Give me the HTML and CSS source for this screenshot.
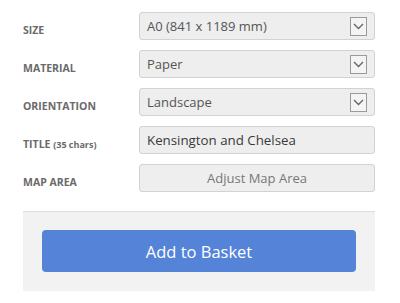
FILE: index.html
```html
<!DOCTYPE html>
<html lang="en">
<head>
  <meta charset="UTF-8">
  <title>Map Options</title>
  <link rel="stylesheet" href="styles.css">
</head>
<body>
  <div class="options">
    <div class="row">
      <div class="label">Size</div>
      <div class="field select">
        <span>A0 (841 x 1189 mm)</span>
        <span class="arrow"><svg width="11" height="7" viewBox="0 0 11 7"><path d="M1 1l4.5 4.5L10 1" fill="none" stroke="#666" stroke-width="1.4"/></svg></span>
      </div>
    </div>
    <div class="row">
      <div class="label">Material</div>
      <div class="field select">
        <span>Paper</span>
        <span class="arrow"><svg width="11" height="7" viewBox="0 0 11 7"><path d="M1 1l4.5 4.5L10 1" fill="none" stroke="#666" stroke-width="1.4"/></svg></span>
      </div>
    </div>
    <div class="row">
      <div class="label">Orientation</div>
      <div class="field select">
        <span>Landscape</span>
        <span class="arrow"><svg width="11" height="7" viewBox="0 0 11 7"><path d="M1 1l4.5 4.5L10 1" fill="none" stroke="#666" stroke-width="1.4"/></svg></span>
      </div>
    </div>
    <div class="row">
      <div class="label">Title <small>(35 chars)</small></div>
      <div class="field input">Kensington and Chelsea</div>
    </div>
    <div class="row">
      <div class="label">Map Area</div>
      <div class="field button">Adjust Map Area</div>
    </div>
  </div>

  <div class="basket">
    <button class="basket-btn">Add to Basket</button>
  </div>
</body>
</html>
```

FILE: styles.css
```css
body {
  margin: 0;
  background: white;
  font-family: "Open Sans", Arial, sans-serif;
}
.options {
  width: 352px;
  margin: 12px 0 0 23px;
  display: flex;
  flex-direction: column;
  gap: 10px;
}
.row {
  display: grid;
  grid-template-columns: 116px 236px;
  align-items: center;
}
.label {
  font-size: 10.5px;
  font-weight: bold;
  text-transform: uppercase;
  color: #6a6a6a;
  padding-top: 8px;
}
.label small {
  font-size: 9px;
  text-transform: none;
}
.field {
  box-sizing: border-box;
  height: 28px;
  border: 1px solid #d2d2d2;
  border-radius: 3px;
  background: #eeeeee;
  color: #555;
  font-size: 13px;
  display: flex;
  align-items: center;
  padding: 0 7px;
}
.select {
  justify-content: space-between;
}
.arrow {
  width: 17px;
  height: 19px;
  box-sizing: border-box;
  border: 1px solid #9a9a9a;
  background: #f4f4f4;
  display: flex;
  align-items: center;
  justify-content: center;
}
.input {
  color: #3a3a3a;
  font-size: 13.3px;
}
.button {
  justify-content: center;
  color: #777;
}
.basket {
  width: 352px;
  box-sizing: border-box;
  margin: 19px 0 0 23px;
  border-top: 1px solid #dddddd;
  background: #f2f2f3;
  padding: 18px 19px 19px;
}
.basket-btn {
  width: 100%;
  height: 42px;
  border: none;
  border-radius: 4px;
  background: #5483d8;
  color: white;
  font-family: "Open Sans", Arial, sans-serif;
  font-size: 16.5px;
}
```
